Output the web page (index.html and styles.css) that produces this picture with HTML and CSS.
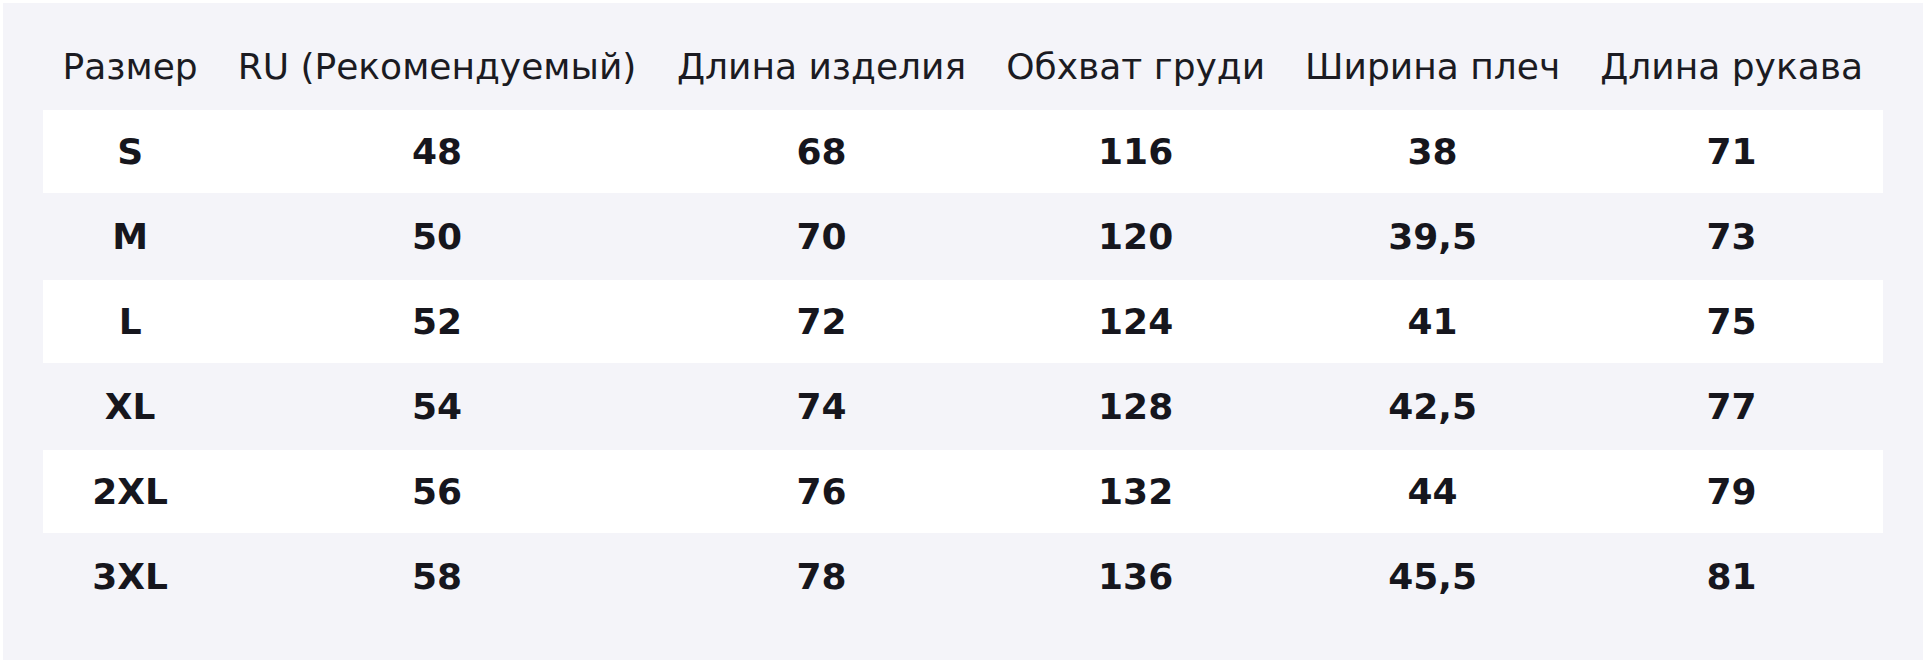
FILE: index.html
```html
<!DOCTYPE html>
<html lang="ru">
<head>
<meta charset="utf-8">
<title>Таблица размеров</title>
<link rel="stylesheet" href="styles.css">
</head>
<body>
<div class="panel">
  <table class="sizes">
    <thead>
      <tr>
        <th>Размер</th>
        <th>RU (Рекомендуемый)</th>
        <th>Длина изделия</th>
        <th>Обхват груди</th>
        <th>Ширина плеч</th>
        <th>Длина рукава</th>
      </tr>
    </thead>
    <tbody>
      <tr class="light"><td>S</td><td>48</td><td>68</td><td>116</td><td>38</td><td>71</td></tr>
      <tr><td>M</td><td>50</td><td>70</td><td>120</td><td>39,5</td><td>73</td></tr>
      <tr class="light"><td>L</td><td>52</td><td>72</td><td>124</td><td>41</td><td>75</td></tr>
      <tr><td>XL</td><td>54</td><td>74</td><td>128</td><td>42,5</td><td>77</td></tr>
      <tr class="light"><td>2XL</td><td>56</td><td>76</td><td>132</td><td>44</td><td>79</td></tr>
      <tr><td>3XL</td><td>58</td><td>78</td><td>136</td><td>45,5</td><td>81</td></tr>
    </tbody>
  </table>
</div>
</body>
</html>
```

FILE: styles.css
```css
html, body {
  margin: 0;
  padding: 0;
  background: #ffffff;
}

body {
  padding: 3px;
  font-family: "DejaVu Sans", "Liberation Sans", sans-serif;
}

.panel {
  background: #f4f4f9;
  padding: 40px 40px 41px 40px;
  height: 657px;
  box-sizing: border-box;
  overflow: hidden;
}

.sizes {
  width: 100%;
  border-collapse: separate;
  border-spacing: 0;
}

.sizes th {
  font-weight: normal;
  font-size: 36px;
  line-height: 42px;
  color: #1b1b22;
  white-space: nowrap;
  text-align: center;
  padding: 3px 19px 21px 19px;
}

.sizes td {
  font-weight: bold;
  font-size: 36px;
  line-height: 42px;
  color: #16161d;
  text-align: center;
  white-space: nowrap;
  height: 85px;
  padding: 0 19px;
  vertical-align: middle;
}

.sizes tr.light td {
  background: #ffffff;
  box-shadow: inset 0 1px 0 #f4f4f9, inset 0 -1px 0 #f4f4f9;
}
```
